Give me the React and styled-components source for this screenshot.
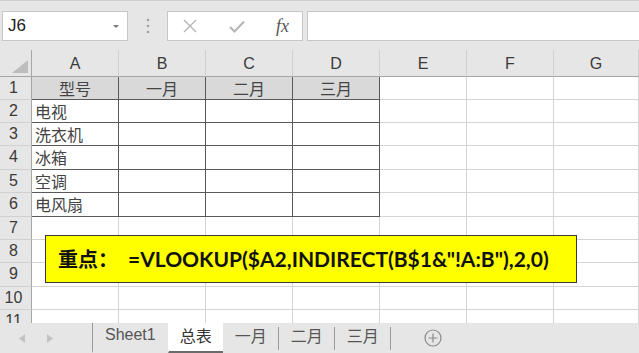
import React from 'react'
import styled, { createGlobalStyle } from 'styled-components'

const GlobalStyle = createGlobalStyle`
  body {
    margin: 0;
    background: #fff;
    font-family: "Liberation Sans", "Noto Sans CJK SC", sans-serif;
  }
`

const colors = {
  chrome: '#e6e6e6',
  chromeLine: '#c6c6c6',
  headLine: '#a6a6a6',
  grid: '#d4d4d4',
  tableLine: '#595959',
  tableHead: '#d9d9d9',
  text: '#3a3a3a',
}

const Window = styled.div`
  width: 639px;
  height: 353px;
  display: flex;
  flex-direction: column;
  overflow: hidden;
  background: #fff;
`

const FormulaBar = styled.div`
  height: 50px;
  box-sizing: border-box;
  background: ${colors.chrome};
  border-top: 1px solid #cfcfcf;
  display: flex;
  align-items: flex-start;
  padding: 10px 0 0 2px;
`

const NameBox = styled.div`
  width: 126px;
  height: 30px;
  box-sizing: border-box;
  background: #fff;
  border: 1px solid ${colors.chromeLine};
  display: flex;
  align-items: center;
  justify-content: space-between;
  padding: 0 8px 0 5px;
  font-size: 17px;
  color: #222;
`

const Caret = styled.span`
  width: 0;
  height: 0;
  border-left: 3px solid transparent;
  border-right: 3px solid transparent;
  border-top: 3px solid #777;
`

const Grip = styled.div`
  width: 39px;
  height: 30px;
  display: flex;
  align-items: center;
  justify-content: center;
`

const FxButtons = styled.div`
  width: 136px;
  height: 30px;
  box-sizing: border-box;
  background: #fff;
  border: 1px solid ${colors.chromeLine};
  display: flex;
  align-items: center;
  justify-content: space-between;
  padding: 0 13px 0 15px;
`

const Fx = styled.span`
  font-family: "Liberation Serif", serif;
  font-style: italic;
  font-size: 18px;
  color: #555;
`

const FormulaInput = styled.div`
  flex: 1;
  height: 30px;
  margin-left: 4px;
  box-sizing: border-box;
  background: #fff;
  border: 1px solid ${colors.chromeLine};
  border-right: none;
`

const Sheet = styled.div`
  position: relative;
  height: 275px;
  overflow: hidden;
  display: grid;
  grid-template-columns: 32px repeat(6, 87px) 1fr;
  grid-template-rows: 27px 23px 23px 23px 24px 23px 24px 23px 23px 24px 23px 23px;
`

const Corner = styled.div`
  background: ${colors.chrome};
  border-right: 1px solid ${colors.headLine};
  border-bottom: 1px solid ${colors.headLine};
  box-sizing: border-box;
  display: flex;
  align-items: flex-end;
  justify-content: flex-end;
  padding: 0 3px 3px 0;
`

const ColHead = styled.div`
  background: ${colors.chrome};
  box-sizing: border-box;
  border-right: 1px solid #d0d0d0;
  border-bottom: 1px solid ${colors.headLine};
  display: flex;
  align-items: center;
  justify-content: center;
  font-size: 16px;
  color: ${colors.text};
  padding-top: 2px;
`

const RowHead = styled.div`
  background: ${colors.chrome};
  box-sizing: border-box;
  border-right: 1px solid ${colors.headLine};
  border-bottom: 1px solid #d0d0d0;
  display: flex;
  align-items: center;
  justify-content: center;
  padding-right: 4px;
  font-size: 16px;
  color: ${colors.text};
`

const Cell = styled.div`
  box-sizing: border-box;
  border-right: 1px solid ${p => (p.$table ? colors.tableLine : colors.grid)};
  border-bottom: 1px solid ${p => (p.$table ? colors.tableLine : colors.grid)};
  background: ${p => (p.$head ? colors.tableHead : '#fff')};
  display: flex;
  align-items: center;
  justify-content: ${p => (p.$head ? 'center' : 'flex-start')};
  padding-left: ${p => (p.$head ? '0' : '3px')};
  font-family: "Noto Sans CJK SC", sans-serif;
  font-size: 16px;
  color: #444;
  white-space: nowrap;
  overflow: hidden;
`

const Callout = styled.div`
  position: absolute;
  left: 45px;
  top: 185px;
  width: 532px;
  height: 48px;
  box-sizing: border-box;
  background: #ffff00;
  border: 1.5px solid #3a3a3a;
  display: flex;
  align-items: center;
  padding-left: 12px;
  font-weight: 700;
  color: #111;
  white-space: nowrap;
`

const CalloutLabel = styled.span`
  font-family: "Noto Sans CJK SC", sans-serif;
  font-size: 20px;
  margin-right: 10px;
`

const Formula = styled.span`
  font-family: Lato, "Liberation Sans", sans-serif;
  font-size: 21px;
`

const TabBar = styled.div`
  flex: 1;
  background: ${colors.chrome};
  display: flex;
  align-items: stretch;
`

const Arrows = styled.div`
  width: 92px;
  display: flex;
  align-items: center;
  gap: 22px;
  padding-left: 19px;
  box-sizing: border-box;
`

const Tab = styled.div`
  display: flex;
  align-items: center;
  justify-content: center;
  padding: 0 ${p => p.$pad || 11}px 4px;
  height: 24px;
  font-family: "Liberation Sans", "Noto Sans CJK SC", sans-serif;
  font-size: 16px;
  color: ${p => (p.$active ? '#333' : '#555')};
  background: ${p => (p.$active ? '#fff' : 'transparent')};
  border-bottom: ${p => (p.$active ? '2px solid #6b6b6b' : '2px solid transparent')};
  border-left: 1px solid ${p => (p.$sep ? '#9a9a9a' : 'transparent')};
`

const Sep = styled.div`
  width: 1px;
  margin: 4px 0 3px;
  background: #9a9a9a;
`

const AddButton = styled.div`
  margin-left: 33px;
  display: flex;
  align-items: center;
`

const cols = ['A', 'B', 'C', 'D', 'E', 'F', 'G']
const tableRows = [
  ['型号', '一月', '二月', '三月'],
  ['电视'],
  ['洗衣机'],
  ['冰箱'],
  ['空调'],
  ['电风扇'],
]

const Grid = () => {
  const rows = []
  for (let r = 1; r <= 11; r++) {
    const data = tableRows[r - 1]
    rows.push(<RowHead key={`h${r}`}>{r}</RowHead>)
    for (let c = 0; c < 7; c++) {
      const inTable = data && c < 4
      rows.push(
        <Cell key={`${r}-${c}`} $table={inTable} $head={r === 1 && c < 4}>
          {inTable ? data[c] || '' : ''}
        </Cell>
      )
    }
  }
  return rows
}

const App = () => {
  return (
    <Window>
      <GlobalStyle />
      <FormulaBar>
        <NameBox>
          <span>J6</span>
          <Caret />
        </NameBox>
        <Grip>
          <svg width='4' height='16' viewBox='0 0 4 16'>
            <circle cx='2' cy='2' r='1.3' fill='#a0a0a0' />
            <circle cx='2' cy='8' r='1.3' fill='#a0a0a0' />
            <circle cx='2' cy='14' r='1.3' fill='#a0a0a0' />
          </svg>
        </Grip>
        <FxButtons>
          <svg width='14' height='14' viewBox='0 0 14 14'>
            <path d='M1 1 L13 13 M13 1 L1 13' stroke='#b5b5b5' strokeWidth='1.4' fill='none' />
          </svg>
          <svg width='16' height='13' viewBox='0 0 16 13'>
            <path d='M1 7 L5.5 11.5 L15 1.5' stroke='#b5b5b5' strokeWidth='2' fill='none' />
          </svg>
          <Fx>fx</Fx>
        </FxButtons>
        <FormulaInput />
      </FormulaBar>

      <Sheet>
        <Corner>
          <svg width='16' height='13' viewBox='0 0 16 13'>
            <polygon points='16,0 16,13 0,13' fill='#bdbdbd' />
          </svg>
        </Corner>
        {cols.map(c => (
          <ColHead key={c}>{c}</ColHead>
        ))}
        {Grid()}
        <Callout>
          <CalloutLabel>重点：</CalloutLabel>
          <Formula>=VLOOKUP($A2,INDIRECT(B$1&"!A:B"),2,0)</Formula>
        </Callout>
      </Sheet>

      <TabBar>
        <Arrows>
          <svg width='6' height='9' viewBox='0 0 6 9'>
            <polygon points='6,0 6,9 0,4.5' fill='#c2c2c2' />
          </svg>
          <svg width='6' height='9' viewBox='0 0 6 9'>
            <polygon points='0,0 0,9 6,4.5' fill='#c2c2c2' />
          </svg>
        </Arrows>
        <Tab $sep $pad={12}>Sheet1</Tab>
        <Tab $active>总表</Tab>
        <Tab>一月</Tab>
        <Sep />
        <Tab>二月</Tab>
        <Sep />
        <Tab>三月</Tab>
        <Sep />
        <AddButton>
          <svg width='18' height='18' viewBox='0 0 18 18'>
            <circle cx='9' cy='9' r='8' stroke='#8a8a8a' strokeWidth='1.2' fill='none' />
            <path d='M9 4.5 V13.5 M4.5 9 H13.5' stroke='#8a8a8a' strokeWidth='1.2' />
          </svg>
        </AddButton>
      </TabBar>
    </Window>
  )
}

export default App
